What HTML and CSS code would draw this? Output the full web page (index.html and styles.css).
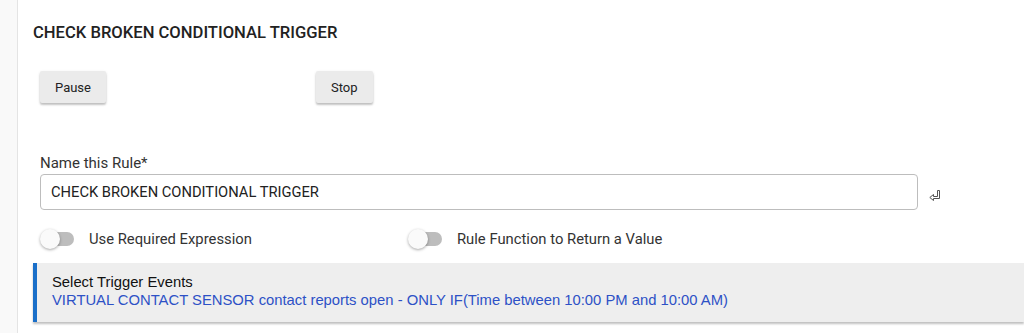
FILE: index.html
```html
<!DOCTYPE html>
<html>
<head>
<meta charset="utf-8">
<link rel="stylesheet" href="styles.css">
</head>
<body>
<div class="layout">
  <aside class="side"></aside>
  <main class="main">
    <h1 class="title">CHECK BROKEN CONDITIONAL TRIGGER</h1>
    <div class="btnrow">
      <div class="btncell"><button class="btn">Pause</button></div>
      <div class="btncell"><button class="btn">Stop</button></div>
    </div>
    <div class="field">
      <label class="label">Name this Rule*</label>
      <div class="inputrow">
        <div class="input">CHECK BROKEN CONDITIONAL TRIGGER</div>
        <svg class="enter" width="11" height="12" viewBox="0 0 11 12">
          <path d="M8.5 0.5 H10.5 V8.5 H4.5 V10.5 L0.8 7.5 L4.5 4.5 V6.5 H8.5 Z" fill="none" stroke="#555" stroke-width="1"/>
        </svg>
      </div>
    </div>
    <div class="toggles">
      <div class="tog"><span class="switch"><span class="knob"></span></span><span class="tlabel">Use Required Expression</span></div>
      <div class="tog"><span class="switch"><span class="knob"></span></span><span class="tlabel">Rule Function to Return a Value</span></div>
    </div>
    <div class="trigger">
      <div class="thead">Select Trigger Events</div>
      <div class="tlink">VIRTUAL CONTACT SENSOR contact reports open - ONLY IF(Time between 10:00 PM and 10:00 AM)</div>
    </div>
  </main>
</div>
</body>
</html>
```
FILE: styles.css
```css
html, body {
  margin: 0;
  padding: 0;
  background: #fff;
  font-family: Roboto, "Liberation Sans", sans-serif;
  color: #222;
}
.layout {
  display: flex;
  min-height: 333px;
}
.side {
  width: 17px;
  flex: none;
  background: #f9f9f9;
  border-right: 1px solid #e4e4e4;
}
.main {
  flex: 1;
  padding-left: 15px;
  display: flex;
  flex-direction: column;
}
.title {
  margin: 23px 0 0 0;
  font-size: 16.6px;
  line-height: 20px;
  font-weight: 500;
  color: #222;
}
.btnrow {
  display: grid;
  grid-template-columns: 276px 276px;
  margin-top: 28px;
  padding-left: 7px;
}
.btn {
  height: 32px;
  padding: 0 15px;
  border: none;
  border-radius: 2px;
  background: #ebebeb;
  font-family: Roboto, sans-serif;
  font-size: 13px;
  color: #222;
  box-shadow: 0 2px 2px rgba(0,0,0,0.18), 0 1px 3px rgba(0,0,0,0.12);
}
.field {
  margin-top: 50px;
  padding-left: 7px;
}
.label {
  display: block;
  font-size: 15px;
  line-height: 20px;
  color: #333;
}
.inputrow {
  display: flex;
  align-items: center;
  margin-top: 1px;
}
.input {
  width: 866px;
  height: 34px;
  border: 1px solid #bdbdbd;
  border-radius: 4px;
  padding-left: 10px;
  font-size: 14.7px;
  line-height: 34px;
  color: #222;
}
.enter {
  margin-left: 11px;
  margin-top: 8px;
}
.toggles {
  display: grid;
  grid-template-columns: 368px 1fr;
  margin-top: 19px;
  padding-left: 7px;
  height: 20px;
}
.tog {
  display: flex;
  align-items: center;
}
.switch {
  position: relative;
  width: 34px;
  height: 20px;
  display: inline-block;
}
.switch::before {
  content: "";
  position: absolute;
  left: 6px;
  top: 3px;
  width: 28px;
  height: 14px;
  border-radius: 7px;
  background: #bdbdbd;
}
.knob {
  position: absolute;
  left: 0;
  top: 0;
  width: 20px;
  height: 20px;
  border-radius: 50%;
  background: #fafafa;
  box-shadow: 0 1px 3px rgba(0,0,0,0.35);
}
.tlabel {
  margin-left: 15px;
  font-size: 14.8px;
  color: #333;
}
.trigger {
  margin-top: 14px;
  background: #eeeeee;
  border-left: 4px solid #1a6fc9;
  padding: 10px 0 13px 15px;
  box-shadow: 0 2px 2px rgba(0,0,0,0.25);
  font-family: "Liberation Sans", Arial, sans-serif;
  font-size: 14.8px;
  line-height: 18px;
}
.thead {
  color: #111;
}
.tlink {
  color: #2d51c6;
}
```
